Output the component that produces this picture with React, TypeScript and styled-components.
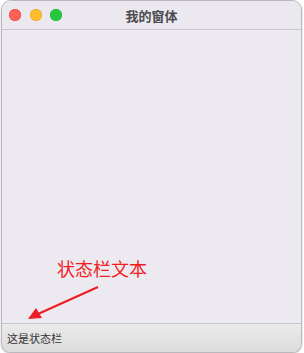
import styled, { createGlobalStyle } from 'styled-components';

const GlobalStyle = createGlobalStyle`
  html, body {
    margin: 0;
    padding: 0;
    background: #ffffff;
  }
  body {
    font-family: 'Noto Sans CJK SC', 'Liberation Sans', sans-serif;
  }
`;

const Stage = styled.div`
  width: 304px;
  height: 353px;
  padding: 0 2px 2px 1px;
  box-sizing: border-box;
`;

const Window = styled.div`
  position: relative;
  height: 100%;
  display: flex;
  flex-direction: column;
  border: 1px solid #b9b8bc;
  border-radius: 10px;
  overflow: hidden;
  background: #eceaf0;
  box-shadow: 0 1px 2px rgba(0, 0, 0, 0.25);
`;

const TitleBar = styled.div`
  position: relative;
  height: 28px;
  flex: none;
  display: flex;
  align-items: center;
  justify-content: center;
  background: #ebe9ef;
  border-bottom: 1px solid #c9c7cd;
`;

const Lights = styled.div`
  position: absolute;
  left: 7px;
  top: 8px;
  display: flex;
  gap: 8.5px;
`;

const Light = styled.span<{ $color: string; $edge: string }>`
  width: 12px;
  height: 12px;
  border-radius: 50%;
  background: ${({ $color }) => $color};
  box-shadow: inset 0 0 0 0.5px ${({ $edge }) => $edge};
`;

const Title = styled.div`
  font-size: 13px;
  font-weight: 700;
  color: #4b4a4e;
`;

const Content = styled.div`
  flex: 1;
  background: #eceaf0;
`;

const StatusBar = styled.div`
  height: 28px;
  flex: none;
  display: flex;
  align-items: center;
  padding-left: 5px;
  border-top: 1px solid #c6c5c9;
  background: linear-gradient(#ebebeb, #dddddd);
  font-size: 11px;
  color: #333333;
`;

const Note = styled.div`
  position: absolute;
  left: 55px;
  top: 254px;
  font-size: 18px;
  color: #f01d22;
`;

const Arrow = styled.svg`
  position: absolute;
  left: 0;
  top: 0;
  pointer-events: none;
`;

export default function App() {
  return (
    <>
      <GlobalStyle />
      <Stage>
        <Window>
          <TitleBar>
            <Lights>
              <Light $color="#fe5f57" $edge="#e0443e" />
              <Light $color="#febc2e" $edge="#dea123" />
              <Light $color="#28c840" $edge="#1aab29" />
            </Lights>
            <Title>我的窗体</Title>
          </TitleBar>
          <Content />
          <StatusBar>这是状态栏</StatusBar>
          <Note>状态栏文本</Note>
          <Arrow width="300" height="350" viewBox="0 0 300 350">
            <line x1="96" y1="286" x2="36" y2="313" stroke="#ee1c24" strokeWidth="2" />
            <polygon points="26,318 34,307 40,317" fill="#ee1c24" />
          </Arrow>
        </Window>
      </Stage>
    </>
  );
}
